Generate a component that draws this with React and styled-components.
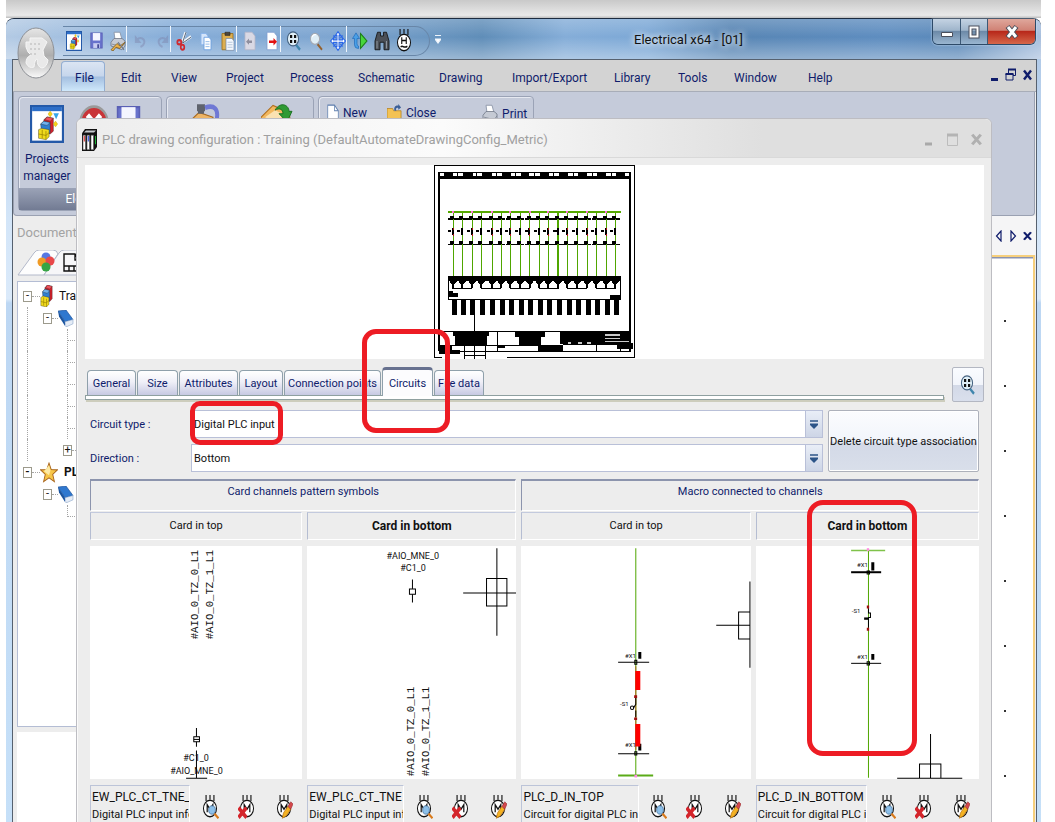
import styled, { createGlobalStyle } from "styled-components";

const GlobalStyle = createGlobalStyle`
  * {
    box-sizing: border-box;
  }

  body {
    margin: 0;
    background: #fff;
    font-family: Roboto, "Liberation Sans", sans-serif;
    font-size: 12px;
    color: #0f1c6b;
  }

  button,
  select {
    font: inherit;
    color: inherit;
    margin: 0;
    padding: 0;
    border: none;
    background: none;
  }

  svg {
    display: block;
    flex: none;
  }
`;

const Page = styled.div`
  position: relative;
  display: flex;
  flex-direction: column;
  height: 100vh;
  padding: 0 14px 0 6px;
  overflow: hidden;
`;

const TopBand = styled.div`
  height: 18px;
  flex: none;
  background: linear-gradient(#c9c9c9, #e9e9e9 85%, #bdbdbd);
`;

const MainWindow = styled.div`
  flex: 1;
  display: flex;
  flex-direction: column;
  min-height: 0;
  padding: 0 4px 0 6px;
  border-top: 1px solid #1c2b3f;
  border-radius: 8px 8px 0 0;
  background: linear-gradient(#a9c4e4, #d3e5f8 200px, #dbeafa 280px, #bdd7f3 284px, #c6e0f8);
`;

const TitleBar = styled.header`
  display: flex;
  align-items: center;
  height: 40px;
  flex: none;
  margin: 0 -4px 0 -6px;
  padding-left: 57px;
  border-radius: 8px 8px 0 0;
  background: linear-gradient(
      rgba(255, 255, 255, 0.2),
      rgba(255, 255, 255, 0) 45%,
      rgba(255, 255, 255, 0.35)
    ),
    linear-gradient(
      90deg,
      #b3cae4,
      #86add8 16%,
      #7da5d0 32%,
      #5f8db8 46%,
      #84add8 54%,
      #7ca8d6 62%,
      #5785b4 70%,
      #5e8dc0 85%,
      #5a88b8 92%,
      #a9c0de
    );
`;

const QuickBar = styled.div`
  display: flex;
  align-items: center;
  height: 30px;
  width: 367px;
  margin-top: 3px;
  border: 1px solid #6886a8;
  border-left: none;
  border-radius: 0 15px 15px 0;
`;

const QuickButton = styled.button`
  display: flex;
  justify-content: center;
  width: 22px;
  flex: none;
  opacity: ${(props) => (props.$dim ? 0.4 : 1)};
`;

const QuickItem = styled.div`
  position: relative;
  display: flex;
  align-items: center;
  width: 22px;
  height: 30px;

  &::after {
    content: "";
    display: ${(props) => (props.$line ? "block" : "none")};
    position: absolute;
    right: 2px;
    top: 0;
    width: 1px;
    height: 26px;
    background: #f0f6fd;
  }
`;

const MoreButton = styled.button`
  margin-left: 5px;
`;

const WindowTitle = styled.h1`
  flex: 1;
  margin: 0 0 0 193px;
  font-size: 13px;
  font-weight: normal;
  color: #111;
  text-shadow: 0 0 6px #fff, 0 0 8px #fff;
`;

const WindowButtons = styled.div`
  display: flex;
  align-self: flex-start;
  height: 26px;
  margin-right: 5px;
  border: 1px solid #2d4a68;
  border-top: none;
  border-radius: 0 0 6px 6px;
  overflow: hidden;
  box-shadow: 0 0 2px #d8e8f8;
`;

const WindowButton = styled.button`
  display: flex;
  align-items: center;
  justify-content: center;
  width: ${(props) => (props.$close ? 48 : 27)}px;
  background: ${(props) =>
    props.$close
      ? "linear-gradient(#dfa79c, #d08275 45%, #b8281a 50%, #d5674a)"
      : "linear-gradient(#c4d3e3, #9fb5cb 45%, #6d8aa8 50%, #9ab6d0)"};

  & + & {
    border-left: 1px solid #3c5875;
  }
`;

const Orb = styled.button`
  position: absolute;
  left: 17px;
  top: 27px;
`;

const Client = styled.div`
  flex: 1;
  display: flex;
  flex-direction: column;
  min-height: 0;
  border: 1px solid #56616f;
  border-bottom: none;
  background: #ededed;
`;

const MenuBar = styled.nav`
  display: flex;
  justify-content: space-between;
  height: 32px;
  flex: none;
  padding-left: 48px;
  background: #d3d3d3;
  border-bottom: 1px solid #a8adb8;
`;

const MenuList = styled.div`
  display: grid;
  grid-template-columns: 46px 50px 55px 64px 68px 81px 73px 102px 64px 56px 74px 51px;
  align-items: end;
`;

const MenuLink = styled.a`
  height: 30px;
  padding-left: 13px;
  margin-right: 2px;
  border-radius: 4px 4px 0 0;
  border: 1px solid ${(props) => (props.$active ? "#93aed2" : "transparent")};
  border-bottom: none;
  background: ${(props) =>
    props.$active
      ? "linear-gradient(#dbe5f3, #c6d6ec 48%, #a4bfe0 52%, #cfe8fb)"
      : "none"};
  line-height: 32px;
  color: #0f1c6b;
  text-decoration: none;
`;

const MenuControls = styled.div`
  display: flex;
  align-items: center;
  gap: 6px;
  padding: 0 4px 2px 0;
`;

const Ribbon = styled.div`
  display: flex;
  gap: 4px;
  height: 124px;
  flex: none;
  margin-right: 1px;
  padding: 4px;
  border: 1px solid #9aa1b2;
  border-top: none;
  border-radius: 0 0 4px 4px;
  background: #c5cbda;
`;

const RibbonGroup = styled.section`
  display: flex;
  flex-direction: column;
  width: ${(props) => props.$width}px;
  border: 1px solid #9ba3b6;
  border-radius: 4px;
  box-shadow: inset 1px 1px 0 #e6e9f1;
`;

const GroupTools = styled.div`
  display: flex;
  flex: 1;
  align-items: flex-start;
  gap: ${(props) => props.$gap}px;
  padding: ${(props) => props.$pad};
`;

const GroupTitle = styled.div`
  height: 22px;
  line-height: 22px;
  text-align: center;
  color: #fff;
  background: linear-gradient(#9ba3b7, #727b93);
`;

const BigTool = styled.button`
  display: flex;
  flex-direction: column;
  align-items: center;
  gap: 8px;
  width: 50px;
  line-height: 17px;
`;

const IconTool = styled.button`
  display: block;
`;

const SmallTool = styled.button`
  display: flex;
  align-items: center;
  gap: 4px;
  margin-right: ${(props) => props.$space}px;
  line-height: 18px;
`;

const Workspace = styled.div`
  flex: 1;
  display: flex;
  justify-content: space-between;
  min-height: 0;
`;

const DocsPanel = styled.aside`
  display: flex;
  flex-direction: column;
  width: 140px;
  padding-left: 4px;
`;

const DocsTitle = styled.div`
  height: 34px;
  line-height: 34px;
  font-size: 13px;
  color: #a3a3a3;
`;

const TreeBox = styled.div`
  height: 446px;
  flex: none;
  margin-top: 5px;
  padding: 3px 0 0 5px;
  border: 1px solid #b4bdd4;
  border-right: none;
  background: #fff;
`;

const TreeRow = styled.div`
  position: relative;
  display: flex;
  align-items: center;
  height: 22px;
  padding-left: ${(props) => props.$depth * 20}px;
  color: #111;
  font-weight: ${(props) => (props.$bold ? "bold" : "normal")};

  &::before {
    content: "";
    display: ${(props) => (props.$trunk ? "block" : "none")};
    position: absolute;
    left: 4px;
    top: 0;
    height: 22px;
    border-left: 1px dotted #a5a5a5;
  }

  &::after {
    content: "";
    display: ${(props) => (props.$branch ? "block" : "none")};
    position: absolute;
    left: 44px;
    top: 0;
    height: 22px;
    border-left: 1px dotted #a5a5a5;
  }
`;

const Expander = styled.button`
  width: 9px;
  height: 11px;
  border: 1px solid #9c9a8c;
  background: #fff;
  font-size: 11px;
  line-height: 8px;
  color: #111;
`;

const TreeDash = styled.span`
  width: ${(props) => (props.$short ? 6 : 8)}px;
  border-top: 1px dotted #a5a5a5;
`;

const TreeCorner = styled.span`
  align-self: flex-start;
  width: 10px;
  height: 12px;
  margin-left: 4px;
  border: 1px dotted #a5a5a5;
  border-width: 0 0 1px 1px;
`;

const TreeLabel = styled.span`
  margin-left: 6px;
`;

const OutputBox = styled.div`
  flex: 1;
  margin-top: 5px;
  background: #fff;
`;

const DrawingPane = styled.div`
  display: flex;
  flex-direction: column;
  width: 60px;
`;

const DrawingNav = styled.div`
  display: flex;
  align-items: center;
  justify-content: flex-end;
  gap: 6px;
  height: 39px;
  padding-right: 4px;
  background: #f5f5f6;
`;

const Sheet = styled.div`
  flex: 1;
  margin-right: 1px;
  border: 1px solid #f6cf7c;
  border-width: 2px 2px 0 0;
  background: linear-gradient(#8a93b0, #8a93b0 1px, #fff 2px);
  overflow: hidden;
`;

const GridDot = styled.div`
  width: 2px;
  height: 2px;
  margin: 63px 0 63px 28px;
  background: #333;

  & + & {
    margin-top: 0;
  }
`;

const Dialog = styled.div`
  position: absolute;
  left: 76px;
  right: 63px;
  top: 118px;
  bottom: -60px;
  border: 1px solid #bdbdc2;
  border-radius: 6px 6px 0 0;
  background: #ededed;
  box-shadow: inset 1px 1px 0 #fafafa;
`;

const DialogTitleBar = styled.div`
  display: flex;
  align-items: center;
  gap: 4px;
  height: 39px;
  padding: 3px 9px 0 5px;
  border-radius: 6px 6px 0 0;
  border-bottom: 1px solid #d9d9d9;
  background: linear-gradient(90deg, #ededed, #fbfbfb 40%, #dfdfdf 75%, #dfdfdf);
`;

const DialogTitle = styled.h2`
  flex: 1;
  margin: 0;
  font-size: 13px;
  font-weight: normal;
  color: #a0a0a0;
`;

const DialogControls = styled.div`
  display: flex;
  gap: 13px;
`;

const Preview = styled.div`
  display: flex;
  justify-content: center;
  margin: 7px 7px 0 8px;
  background: #fff;
`;

const TabLine = styled.div`
  display: flex;
  align-items: flex-start;
  justify-content: space-between;
  gap: 8px;
  margin: 8px 7px 0 8px;
`;

const TabArea = styled.div`
  flex: 1;
`;

const TabList = styled.div`
  display: flex;
  align-items: flex-end;
  gap: 1px;
  height: 28px;
  padding-left: 2px;
`;

const Tab = styled.button`
  width: ${(props) => props.$width}px;
  height: ${(props) => (props.$active ? 29 : 25)}px;
  margin-bottom: ${(props) => (props.$active ? -1 : 0)}px;
  position: relative;
  border: 1px solid #8fa0ab;
  border-top: ${(props) => (props.$active ? "3px solid #67718f" : "1px solid #8fa0ab")};
  border-bottom: none;
  border-radius: 4px 4px 0 0;
  background: ${(props) =>
    props.$active ? "#fcfcfe" : "linear-gradient(#fff, #f0f0f8 45%, #c7c9e2)"};
  white-space: nowrap;
  font-size: 11px;
`;

const TabRail = styled.div`
  height: 5px;
  border: 1px solid #8fa0a0;
  background: #fff;
  box-shadow: 1px 2px 0 #cdcdbd;
`;

const ZoomButton = styled.button`
  display: flex;
  align-items: center;
  justify-content: center;
  width: 32px;
  height: 35px;
  border: 1px solid #b3b7c2;
  border-radius: 2px;
  background: linear-gradient(#fafcff, #f2f5fb 50%, #d3d9e7 52%, #d9dfec);
`;

const Body = styled.div`
  margin: 8px 12px 0 13px;
  font-size: 11px;
`;

const FormArea = styled.div`
  display: flex;
  gap: 5px;
  height: 62px;
`;

const Fields = styled.div`
  flex: 1;
  display: flex;
  flex-direction: column;
  gap: 6px;
`;

const Field = styled.div`
  display: flex;
  align-items: center;
  height: 28px;
`;

const FieldLabel = styled.label`
  width: 101px;
`;

const SelectBox = styled.div`
  position: relative;
  flex: 1;
  height: 28px;
  border: 1px solid #b9c0d8;
  background: #fff;
`;

const Select = styled.select`
  appearance: none;
  width: 100%;
  height: 26px;
  padding-left: 2px;
  color: #111;
`;

const SelectArrow = styled.span`
  position: absolute;
  right: 0;
  top: 0;
  display: flex;
  align-items: center;
  justify-content: center;
  width: 17px;
  height: 26px;
  border-left: 1px solid #b9c0d8;
  background: linear-gradient(#e9eef7, #cdd5e6);
  pointer-events: none;
`;

const DeleteButton = styled.button`
  width: 151px;
  border: 1px solid #adb1bb;
  border-radius: 2px;
  background: linear-gradient(#fbfcfe, #f2f5fb 50%, #d3d9e7 54%, #d9dfea);
  box-shadow: inset 0 0 0 1px #fff;
  color: #111;
  white-space: nowrap;
`;

const Columns = styled.div`
  display: grid;
  grid-template-columns: 212fr 209fr 229fr 223fr;
  column-gap: 5px;
  margin-top: 7px;
`;

const GroupHead = styled.div`
  grid-column: span 2;
  height: 32px;
  line-height: 22px;
  border: 1px solid #fff;
  border-top: 2px solid #8c94ad;
  border-left: 1px solid #8c94ad;
  text-align: center;
`;

const ColumnHead = styled.div`
  height: 28px;
  margin: 1px 0 6px;
  line-height: 26px;
  border: 1px solid #fff;
  border-top-color: #c3cade;
  border-left-color: #b5bdd2;
  text-align: center;
  font-size: ${(props) => (props.$bold ? 12 : 11)}px;
  font-weight: ${(props) => (props.$bold ? "bold" : "normal")};
  color: #111;
`;

const Canvas = styled.svg`
  width: 100%;
  height: 233px;
  background: #fff;
`;

const CardFoot = styled.div`
  display: flex;
  min-width: 0;
  margin-top: 6px;
`;

const CardName = styled.div`
  flex: 1;
  min-width: 0;
  height: 44px;
  margin-right: 1px;
  padding: 2px 0 0 1px;
  border: 1px solid #fff;
  border-top-color: #bcc4d8;
  border-left-color: #bcc4d8;
  overflow: hidden;
  white-space: nowrap;
  line-height: 18px;
  color: #111;
`;

const CardCode = styled.div`
  font-size: 12px;
`;

const CardText = styled.div`
  font-size: 11px;
`;

const CardButton = styled.button`
  width: 37px;
  height: 44px;
  display: flex;
  justify-content: center;
  padding-top: 10px;
`;

const Mark = styled.div`
  position: absolute;
  left: ${(props) => props.$x}px;
  top: ${(props) => props.$y}px;
  width: ${(props) => props.$w}px;
  height: ${(props) => props.$h}px;
  border: 5px solid #ed1c24;
  border-radius: ${(props) => props.$r}px;
  pointer-events: none;
`;

const Icon = ({ w = 16, h = 20, box = "0 0 16 16", children }) => (
  <svg width={w} height={h} viewBox={box} preserveAspectRatio='none' fill='none'>
    {children}
  </svg>
);

const Cubes = () => (
  <g stroke='#222' strokeWidth='.3'>
    <path d='M6 2l3-2 6 1v9l-3 2-5-1z' fill='#d3202a' />
    <path d='M9 0l6 1-3 2-5-1z' fill='#f0505a' />
    <path d='M3 5l3-2 6 1v7l-3 2-5-1z' fill='#2f7fd0' />
    <path d='M6 3l6 1-3 2-6-1z' fill='#6fb2ee' />
    <path d='M1 9l3-1 7 1v5l-3 2-7-1z' fill='#f0da1c' />
    <path d='M1 12l7 1 3-2M4.500 9v6M8 10v6' stroke='#9a8500' strokeWidth='.6' />
  </g>
);

const ManagerIcon = ({ w, h }) => (
  <Icon w={w} h={h}>
    <rect x='.5' y='.5' width='15' height='15' fill='#fff' stroke='#2459a8' />
    <path d='M1 1.700h14' stroke='#2e6fc8' strokeWidth='1.800' />
    <g transform='translate(3.500 5) scale(.5 .6)'>
      <Cubes />
    </g>
    <path d='M8.500 3.800l1-1.200 1 1.200-1 1.200zM11 8l1-1.200 1 1.200-1 1.200z' fill='#f5d21c' stroke='#c9a400' strokeWidth='.2' />
    <path d='M11 3.500h2.600L12.300 6z' fill='#34a6e8' />
  </Icon>
);

const SaveIcon = ({ w, h }) => (
  <Icon w={w} h={h}>
    <path d='M1 1h14v14H1z' fill='#6872cc' stroke='#5a60b5' />
    <path d='M3.500 1h9v7h-9z' fill='#f4f5ff' />
    <path d='M4 10.500h8V15H4z' fill='#c9cdf0' />
    <path d='M9 11.500h2V15H9z' fill='#3b4192' />
  </Icon>
);

const PrinterIcon = ({ tool }) => (
  <Icon>
    <path d='M5 7l-1-6h6l2 6z' fill='#fff' stroke='#8b95a8' strokeWidth='.8' />
    <path d='M1 9l3-3h8l3 2v4l-3 3-11-3z' fill='#c5cad4' stroke='#6f7786' strokeWidth='.7' />
    <path d='M2 10.500l10 2 3-3' stroke='#6f7786' strokeWidth='.6' />
    {tool && (
      <>
        <path d='M1 15l6-5 3 2 5-3-5 5-4-1-3 3z' fill='#e9b04a' stroke='#7c5a1e' strokeWidth='.7' />
        <path d='M8 9l6 6' stroke='#6f7786' />
      </>
    )}
  </Icon>
);

const UndoIcon = ({ flip }) => (
  <Icon w={15} h={16}>
    <g transform={flip ? "translate(16 0) scale(-1 1)" : undefined}>
      <path d='M4 7c4-4 9-1 8 3-.4 2-2 3-4 4' stroke='#7c7fa6' strokeWidth='2' />
      <path d='M2 2v8h7z' fill='#7c7fa6' />
    </g>
  </Icon>
);

const ScissorsIcon = () => (
  <Icon>
    <path d='M6 9.500L9.500 1M7 9l8-4.500' stroke='#f1f4f8' strokeWidth='2.400' />
    <path d='M6.500 9.500L10 1M7 9.500l8-4.500' stroke='#48586c' strokeWidth='.8' />
    <ellipse cx='3.300' cy='9' rx='2' ry='1.700' stroke='#cf2a30' strokeWidth='1.700' />
    <ellipse cx='6.500' cy='13' rx='1.800' ry='2' stroke='#cf2a30' strokeWidth='1.700' />
  </Icon>
);

const CopyIcon = () => (
  <Icon>
    <path d='M3 2h5l2 2v7H3z' fill='#d5e5fa' stroke='#8ab4ec' strokeWidth='.8' />
    <path d='M6 5h5l2 2v8H6z' fill='#fff' stroke='#6b9fe0' strokeWidth='.8' />
    <path d='M7.500 8.500h4M7.500 10.500h4M7.500 12.500h4' stroke='#7ba9e2' strokeWidth='.7' />
  </Icon>
);

const PasteIcon = () => (
  <Icon>
    <path d='M2 2h11v13H2z' fill='#dcae50' stroke='#9d7422' strokeWidth='.8' />
    <path d='M5 1h5v2.500H5z' fill='#4d463a' stroke='#2f2a22' strokeWidth='.6' />
    <path d='M6 6h6l2 2v7.500H6z' fill='#f4f8fd' stroke='#6d84a8' strokeWidth='.6' />
    <path d='M7.500 9h5M7.500 11h5M7.500 13h5' stroke='#a3b7d3' strokeWidth='.7' />
  </Icon>
);

const SheetIcon = ({ back }) => (
  <Icon>
    <path d='M3 1h7l3 3v11H3z' fill={back ? "#d9d9e4" : "#fff"} stroke={back ? "#b7b8c8" : "#7f9dcf"} strokeWidth='.7' />
    <path
      d={back ? "M4 8.500l3-2.500v1.500h3v2H7V11z" : "M13 8.500L9.500 5.500v2H5v2h4.500v2z"}
      fill={back ? "#8f8f9e" : "#e21212"}
    />
  </Icon>
);

const LensIcon = ({ fit }) => (
  <Icon>
    <path d='M9.500 10.500l4.500 4.500' stroke={fit ? "#3f86ad" : "#94612e"} strokeWidth={fit ? 2.200 : 1.800} />
    <ellipse cx='7' cy='6.300' rx={fit ? 5.600 : 4.600} ry={fit ? 5.600 : 4.400} fill='#dfeef6' stroke={fit ? "#44617f" : "#a3a9b3"} />
    {fit ? (
      <path d='M4 3.200h2.200v2.400H4zM8 3.200h2.200v2.400H8zM4 7.200h2.200v2.400H4zM8 7.200h2.200v2.400H8z' fill='#111' />
    ) : (
      <path d='M4 5c1-2 3-2.500 4-2' stroke='#fff' />
    )}
  </Icon>
);

const PanIcon = () => (
  <Icon>
    <path
      d='M8 .5l2.500 3H9V7h3.500V5.500l3 2.500-3 2.500V9H9v3.500h1.500L8 15.500l-2.500-3H7V9H3.500v1.500L.5 8l3-2.500V7H7V3.500H5.500z'
      fill='#fff'
      stroke='#2a67e8'
      strokeWidth='1'
    />
    <path d='M3.500 3.500l2 2M12.500 3.500l-2 2M3.500 12.500l2-2M12.500 12.500l-2-2' stroke='#2a67e8' strokeWidth='1.300' />
  </Icon>
);

const RefreshIcon = () => (
  <Icon>
    <path d='M2.500 6v5q0 3 4 3v-2q-1.500 0-1.500-2V6h2.500L4 1.500.5 6z' fill='#4a9fe6' stroke='#1c68b8' strokeWidth='.6' />
    <path d='M8.500 2l6.500 6-6.500 6z' fill='#48d63c' stroke='#1c7d16' strokeWidth='.9' />
  </Icon>
);

const BinocularsIcon = () => (
  <Icon>
    <path d='M3.500 1h3v3h3V1h3l2.500 7v7h-5V9H6v6H1V8z' fill='#4b5058' stroke='#15171a' strokeWidth='.8' />
    <path d='M3 8v6M12.500 8v6' stroke='#8e959e' />
  </Icon>
);

const MotorIcon = ({ kind }) => (
  <Icon w={18} h={24}>
    <path d='M4.500 0v4M8 0v3M11.500 0v4' stroke='#111' />
    <ellipse cx='8' cy='9' rx='5.800' ry='5.500' fill='#fff' stroke='#111' strokeWidth='.9' />
    {kind ? (
      <path d='M5.500 11.500v-5l2.500 3 2.500-3v5' stroke='#111' strokeWidth='1.100' />
    ) : (
      <path d='M6 5.500v4.500M10 5.500v4.500M6 7.700h4M5 12c2-1.500 3 1.200 6-.5' stroke='#111' />
    )}
    {kind === "find" && (
      <>
        <path d='M11.500 12l4 3.500' stroke='#d97a1b' strokeWidth='1.600' />
        <ellipse cx='9.800' cy='10' rx='3' ry='2.800' fill='#8cc0ea' stroke='#4b7298' strokeWidth='.6' />
      </>
    )}
    {kind === "delete" && <path d='M.5 8.500l7 6.500M7.500 8.500l-7 6.500' stroke='#d4252b' strokeWidth='2.800' />}
    {kind === "edit" && (
      <>
        <path d='M6.500 15.500l1-3.500 4-4.500 2.500 2-4 4.500z' fill='#f4b223' stroke='#b36b0c' strokeWidth='.5' />
        <path d='M11.500 7.500l2.500-3 2 1.500-2 3.500z' fill='#d5484b' stroke='#8c2327' strokeWidth='.4' />
      </>
    )}
  </Icon>
);

const BookIcon = () => (
  <Icon w={16} h={17}>
    <path d='M0 1l8-1 7 9-8 2z' fill='#2f78cf' stroke='#1c4e94' strokeWidth='.6' />
    <path d='M0 1l7 10v4L1 6z' fill='#1a549f' />
    <path d='M7 11l8-2v4l-7 3z' fill='#e5ecf6' stroke='#7e9cc4' strokeWidth='.5' />
  </Icon>
);

const StarIcon = () => (
  <Icon w={18} h={21}>
    <path
      d='M8 .8l2 5 5.500.2-4.200 3.500 1.500 5.500L8 12l-4.800 3 1.500-5.500L.5 6 6 5.800z'
      fill='#f7c648'
      stroke='#a8641c'
      strokeWidth='.8'
    />
    <path d='M8 2.500l1.300 4L8 10 3.500 7z' fill='#fdeaa5' />
  </Icon>
);

const CrossGlyph = ({ color = "#0f1c6b", w = 9, h = 12 }) => (
  <Icon w={w} h={h} box='0 0 9 12'>
    <path d='M1 1.500l7 9M8 1.500l-7 9' stroke={color} strokeWidth='2.400' />
  </Icon>
);

const QUICK_TOOLS = [
  { name: "Projects manager", icon: <ManagerIcon w={16} h={20} /> },
  { name: "Save", icon: <SaveIcon w={13} h={17} /> },
  { name: "Print", icon: <PrinterIcon tool />, line: true },
  { name: "Undo", icon: <UndoIcon />, dim: true },
  { name: "Redo", icon: <UndoIcon flip />, dim: true, line: true },
  { name: "Cut", icon: <ScissorsIcon /> },
  { name: "Copy", icon: <CopyIcon /> },
  { name: "Paste", icon: <PasteIcon />, line: true },
  { name: "Previous", icon: <SheetIcon back /> },
  { name: "Next", icon: <SheetIcon />, line: true },
  { name: "Zoom fit", icon: <LensIcon fit /> },
  { name: "Zoom", icon: <LensIcon /> },
  { name: "Pan", icon: <PanIcon />, line: true },
  { name: "Refresh", icon: <RefreshIcon /> },
  { name: "Find", icon: <BinocularsIcon /> },
  { name: "Component", icon: <MotorIcon /> },
];

const MENUS = [
  "File",
  "Edit",
  "View",
  "Project",
  "Process",
  "Schematic",
  "Drawing",
  "Import/Export",
  "Library",
  "Tools",
  "Window",
  "Help",
];

const TABS = [
  ["General", 49],
  ["Size", 41],
  ["Attributes", 59],
  ["Layout", 44],
  ["Connection points", 97],
  ["Circuits", 51],
  ["File data", 50],
];

const TREE = [
  { depth: 0, open: true, icon: <Icon w={13} h={22}><Cubes /></Icon>, label: "Training" },
  { depth: 1, open: true, icon: <BookIcon />, trunk: true },
  { depth: 2, trunk: true },
  { depth: 2, trunk: true },
  { depth: 2, trunk: true },
  { depth: 2, trunk: true },
  { depth: 2, trunk: true },
  { depth: 2, open: false, trunk: true },
  { depth: 0, open: true, icon: <StarIcon />, label: "PLC", bold: true },
  { depth: 1, open: true, icon: <BookIcon /> },
  { depth: 2 },
];

const WIRES = [
  100, 127, 157, 184, 217, 244, 271, 301, 329, 358, 385, 414, 442, 472, 502, 529, 559, 586,
];

const BAR_XS = [
  103, 130, 158, 188, 217, 247, 274, 304, 331, 361, 388, 418, 448, 475, 505, 533, 562, 589,
];

function SheetDrawing() {
  return (
    <svg
      width='201'
      height='194'
      viewBox='42 33 603 582'
      fill='none'
      stroke='#000'
      strokeWidth='3'
      shapeRendering='crispEdges'
    >
      <path d='M44 612V35h599v576H261M44 611h22' />
      <path d='M57 590V54M630 590V54' strokeWidth='6' />
      <path d='M54 64h579' strokeWidth='20' />
      <path
        d='M60 61h12M100 61h12M115 61h14M158 61h11M172 61h14M216 61h12M232 61h14M273 61h12M289 61h13M328 61h13M344 61h15M388 61h12M403 61h14M444 61h14M461 61h14M502 61h14M519 61h12M558 61h14M575 61h12M615 61h12'
        stroke='#fff'
        strokeWidth='8'
      />
      <path d='M84 174h519' stroke='#55a800' strokeWidth='6' />
      <path d='M84 195h171M258 195h54M315 195h197M516 195h84' strokeWidth='5' />
      <path d='M84 271h171M258 271h54M315 271h197M516 271h84' />
      {WIRES.map((x, i) => (
        <g key={x}>
          <path d={`M${x} 177v195`} stroke='#4fa600' strokeWidth='4' />
          <path d={`M${x - 9} 190h12M${x - 9} 266h12`} strokeWidth='8' />
          <path d={`M${x - 15} 230h9M${x - 5} 230h5M${x - 1} 222v22`} strokeWidth='6' />
          {i % 2 === 0 && <path d={`M${x - 3} 174h6`} stroke='#ff6fd8' strokeWidth='6' />}
          {i % 2 === 0 && <path d={`M${x} 222v6M${x} 239v6`} stroke='#b01010' strokeWidth='4' />}
          <path d={`M${x - 12} 381h24l-6 8h-3v14h-6v-14h-3z`} fill='#000' stroke='none' />
        </g>
      ))}
      {BAR_XS.map((x) => (
        <path key={x} d={`M${x} 437v45`} strokeWidth='15' />
      ))}
      <path d='M84 374h519' strokeWidth='15' />
      <path d='M97 404h60M184 404h60M271 404h60M358 404h58M442 404h60M529 404h58' />
      <path d='M86 374v62h516v-62' />
      <path d='M86 417h14M86 424h28M570 430h32' strokeWidth='12' />
      <path d='M163 478v137M133 615v-46h64v46M133 603h64M60 533h570M60 592h573' />
      <path
        d='M100 534h106v12h-6v28H105v-28h-5zM285 534h91v16h-13v24h-66v-24h-12zM420 534h210v36H420zM354 572h75v19h-75zM57 573h40v16h24v12H57zM592 568h46v16h-46zM234 574h20v8h-20z'
        fill='#000'
        stroke='none'
      />
      <path d='M233 533v58M530 570v22M95 574h330M429 571h170M602 570v22' />
      <path d='M555 543h45M555 553h45M555 563h72M444 567h10M474 567h12M500 567h14' stroke='#c9c9c9' strokeWidth='4' />
    </svg>
  );
}

const SvgText = styled.text`
  font-size: 27px;
  fill: #111;
  stroke: none;
  text-anchor: middle;
`;

const SvgTerm = styled.text`
  font-family: "Liberation Mono", monospace;
  font-size: 32px;
  fill: #111;
  stroke: none;
`;

const SvgRef = styled.text`
  font-size: 18px;
  fill: #111;
  stroke: none;
`;

function CardTop() {
  return (
    <Canvas viewBox='30 20 636 697' stroke='#000' strokeWidth='3' fill='none'>
      <SvgTerm transform='translate(355 299) rotate(-90)'>#AIO_0_TZ_0_L1</SvgTerm>
      <SvgTerm transform='translate(400 299) rotate(-90)'>#AIO_0_TZ_1_L1</SvgTerm>
      <path d='M349 565v56M349 632v82M318 715h63' />
      <path d='M341 591h17v15h-17z' fill='#fff' />
      <path d='M341 599h17' />
      <SvgText x='348' y='664'>#C1_0</SvgText>
      <SvgText x='349' y='704'>#AIO_MNE_0</SvgText>
    </Canvas>
  );
}

function CardBottom() {
  return (
    <Canvas viewBox='681 20 627 697' stroke='#000' strokeWidth='3' fill='none'>
      <SvgText x='998' y='59'>#AIO_MNE_0</SvgText>
      <SvgText x='999' y='95'>#C1_0</SvgText>
      <path d='M997 120v69' />
      <path d='M988 148h18v16h-18z' fill='#fff' />
      <path d='M1250 26v262M1149 160h159M1219 117h61v82h-61z' />
      <SvgTerm transform='translate(1003 709) rotate(-90)'>#AIO_0_TZ_0_L1</SvgTerm>
      <SvgTerm transform='translate(1048 709) rotate(-90)'>#AIO_0_TZ_1_L1</SvgTerm>
    </Canvas>
  );
}

function MacroTop() {
  return (
    <Canvas viewBox='18 20 687 697' stroke='#000' strokeWidth='3' fill='none'>
      <path d='M362 26v682' stroke='#4fa600' />
      <path d='M309 707h105' stroke='#5bab18' strokeWidth='6' />
      <path d='M358 709h8' stroke='#ff8be0' strokeWidth='8' />
      <path d='M309 368h93M309 642h93' />
      <path d='M362 380v250' stroke='#b06a20' />
      <path d='M374 337v20M374 612v20' strokeWidth='9' />
      <path d='M368 394v57M368 553v67' stroke='#f00' strokeWidth='15' />
      <path d='M359 362h6v12h-6zM359 636h6v10h-6z' />
      <path d='M362 474v20l-8 12M362 512v20' />
      <circle cx='351' cy='504' r='5' />
      <path d='M357 471h9M357 537h9' stroke='#a01010' strokeWidth='8' />
      <SvgRef x='330' y='354'>#X1</SvgRef>
      <SvgRef x='315' y='499'>-S1</SvgRef>
      <SvgRef x='330' y='623'>#X1</SvgRef>
      <path d='M704 126v258M603 257h101M704 217h-34v81h34' />
    </Canvas>
  );
}

function MacroBottom() {
  return (
    <Canvas viewBox='720 20 669 697' stroke='#000' strokeWidth='3' fill='none'>
      <path d='M1057 34v680' stroke='#4fa600' />
      <path d='M1005 33h102' stroke='#7fc24a' strokeWidth='5' />
      <path d='M1052 30h7' stroke='#ff8be0' strokeWidth='8' />
      <path d='M1005 98h90' strokeWidth='6' />
      <path d='M1005 371h90' />
      <path d='M1070 68v25M1070 343v17' strokeWidth='9' />
      <path d='M1053 94h7v9h-7zM1053 366h7v10h-7z' />
      <path d='M1057 206v14h6v14h-6v30' />
      <path d='M1044 237h14' strokeWidth='7' />
      <path d='M1052 202h7M1052 269h7' stroke='#a01010' strokeWidth='9' />
      <SvgRef x='1023' y='83'>#X1</SvgRef>
      <SvgRef x='1007' y='221'>-S1</SvgRef>
      <SvgRef x='1023' y='357'>#X1</SvgRef>
      <path d='M1243 583v132M1210 715v-42h64v42M1143 715h195' />
    </Canvas>
  );
}

const CARDS = [
  { head: "Card in top", code: "EW_PLC_CT_TNE_", text: "Digital PLC input info", Drawing: CardTop },
  { head: "Card in bottom", bold: true, code: "EW_PLC_CT_TNE", text: "Digital PLC input inf", Drawing: CardBottom },
  { head: "Card in top", code: "PLC_D_IN_TOP", text: "Circuit for digital PLC inp", Drawing: MacroTop },
  { head: "Card in bottom", bold: true, code: "PLC_D_IN_BOTTOM", text: "Circuit for digital PLC in", Drawing: MacroBottom },
];

function ComboField({ id, label, value }) {
  return (
    <Field>
      <FieldLabel htmlFor={id}>{label}</FieldLabel>
      <SelectBox>
        <Select id={id} defaultValue={value}>
          <option>{value}</option>
        </Select>
        <SelectArrow>
          <Icon w={8} h={9} box='0 0 8 9'>
            <path d='M0 1h8' stroke='#2c5488' strokeWidth='1.500' />
            <path d='M0 3.500h8v1.500L4 9 0 5z' fill='#2c5488' />
          </Icon>
        </SelectArrow>
      </SelectBox>
    </Field>
  );
}

function PlcDialog() {
  return (
    <Dialog role='dialog' aria-label='PLC drawing configuration'>
      <DialogTitleBar>
        <Icon w={16} h={22}>
          <path d='M0 3l3-3h12v13l-3 3H0z' fill='#111' />
          <path d='M2 2.500l2-1.500h10l-2 1.500z' fill='#c8ccd0' />
          <path d='M1 4.500h2.500V15H1zM5 4.500h2.500V15H5zM9 4.500h2.500V15H9z' fill='#fff' stroke='#555' strokeWidth='.5' />
          <path d='M2.300 5v4' stroke='#e02020' />
          <path d='M6.300 5v4' stroke='#2040e0' />
          <path d='M13.500 5v6' stroke='#18b030' />
        </Icon>
        <DialogTitle>
          PLC drawing configuration : Training (DefaultAutomateDrawingConfig_Metric)
        </DialogTitle>
        <DialogControls>
          <button aria-label='Minimize'>
            <Icon w={11} h={13} box='0 0 11 13'>
              <path d='M2 11h7' stroke='#a9a9a9' strokeWidth='3' />
            </Icon>
          </button>
          <button aria-label='Maximize'>
            <Icon w={11} h={13} box='0 0 11 13'>
              <path d='M.5 1.500h10v11H.5z' stroke='#bcbcbc' />
              <path d='M0 2h11' stroke='#b4b4b4' strokeWidth='3' />
            </Icon>
          </button>
          <button aria-label='Close'>
            <CrossGlyph color='#b0b0b0' w={11} h={13} />
          </button>
        </DialogControls>
      </DialogTitleBar>
      <Preview>
        <SheetDrawing />
      </Preview>
      <TabLine>
        <TabArea>
          <TabList role='tablist'>
            {TABS.map(([name, width]) => (
              <Tab
                key={name}
                role='tab'
                aria-selected={name === "Circuits"}
                $width={width}
                $active={name === "Circuits"}
              >
                {name}
              </Tab>
            ))}
          </TabList>
          <TabRail />
        </TabArea>
        <ZoomButton aria-label='Zoom fit'>
          <LensIcon fit />
        </ZoomButton>
      </TabLine>
      <Body>
        <FormArea>
          <Fields>
            <ComboField id='type' label='Circuit type :' value='Digital PLC input' />
            <ComboField id='direction' label='Direction :' value='Bottom' />
          </Fields>
          <DeleteButton>Delete circuit type association</DeleteButton>
        </FormArea>
        <Columns>
          <GroupHead>Card channels pattern symbols</GroupHead>
          <GroupHead>Macro connected to channels</GroupHead>
          {CARDS.map(({ head, bold }, i) => (
            <ColumnHead key={i} $bold={bold}>
              {head}
            </ColumnHead>
          ))}
          {CARDS.map(({ Drawing }, i) => (
            <Drawing key={i} />
          ))}
          {CARDS.map(({ code, text }, i) => (
            <CardFoot key={i}>
              <CardName>
                <CardCode>{code}</CardCode>
                <CardText>{text}</CardText>
              </CardName>
              {["find", "delete", "edit"].map((kind) => (
                <CardButton key={kind} aria-label={kind}>
                  <MotorIcon kind={kind} />
                </CardButton>
              ))}
            </CardFoot>
          ))}
        </Columns>
      </Body>
    </Dialog>
  );
}

function RibbonBar() {
  return (
    <Ribbon>
      <RibbonGroup $width={144}>
        <GroupTools $gap={7} $pad='8px 0 0 3px'>
          <BigTool>
            <ManagerIcon w={34} h={38} />
            <span>
              Projects
              <br />
              manager
            </span>
          </BigTool>
          <IconTool aria-label='Close project'>
            <Icon w={30} h={36}>
              <circle cx='8' cy='8' r='7.300' fill='#c93438' stroke='#9a9a9a' strokeWidth='1.200' />
              <path d='M4.500 4.500l7 7M11.500 4.500l-7 7' stroke='#fff' strokeWidth='2.500' />
            </Icon>
          </IconTool>
          <IconTool aria-label='Save'>
            <SaveIcon w={25} h={34} />
          </IconTool>
        </GroupTools>
        <GroupTitle>Electrical</GroupTitle>
      </RibbonGroup>
      <RibbonGroup $width={148}>
        <GroupTools $gap={40} $pad='6px 0 0 22px'>
          <IconTool aria-label='Archive'>
            <Icon w={32} h={38}>
              <path d='M0 8l5-4 7 2-4 5z' fill='#eeb565' stroke='#a56a24' strokeWidth='.5' />
              <path d='M4 .5h4v3H4zM4.500 2.500h3v2h-3z' fill='#5f636d' />
              <path d='M8 2c5-1.500 6.500 1 6 4v6' stroke='#6f78d4' strokeWidth='2' />
            </Icon>
          </IconTool>
          <IconTool aria-label='Unarchive'>
            <Icon w={32} h={38}>
              <path d='M0 6l6-5 8 3 1 5-7 4-7-3z' fill='#f2b75e' stroke='#b06f20' strokeWidth='.5' />
              <path d='M2 6l5-3 5 2-5 3z' fill='#fbe2b2' />
              <path d='M7 3c3-4 7-2 7 .5h1.500L13 8 9 4.500h2c0-2-2-2.500-4-1.500z' fill='#2f9a34' stroke='#146c1a' strokeWidth='.4' />
            </Icon>
          </IconTool>
        </GroupTools>
      </RibbonGroup>
      <RibbonGroup $width={216}>
        <GroupTools $gap={0} $pad='7px 0 0 8px'>
          <SmallTool $space={20}>
            <Icon w={12} h={18}>
              <path d='M1 1h9l5 5v9H1z' fill='#fff' stroke='#5f7fae' />
              <path d='M10 1v5h5' stroke='#5f7fae' />
            </Icon>
            New
          </SmallTool>
          <SmallTool $space={46}>
            <Icon w={15} h={18}>
              <path d='M0 4h6l1 2h8v9H0z' fill='#f3c254' stroke='#b17d1c' strokeWidth='.7' />
              <path d='M8 6c-1-3 1-5 4-4.500V0l3 3-3 2V3.500C10 3.200 9 4 10 6z' fill='#3c5f97' />
            </Icon>
            Close
          </SmallTool>
          <SmallTool>
            <PrinterIcon />
            Print
          </SmallTool>
        </GroupTools>
      </RibbonGroup>
    </Ribbon>
  );
}

function DocumentsPanel() {
  return (
    <DocsPanel>
      <DocsTitle>Documents</DocsTitle>
      <Icon w={100} h={26} box='0 0 100 26'>
        <path d='M1 25L17 3q2-3 5-3h14q4 0 5 4l-14 21z' fill='#fdfdfd' stroke='#b3b9ca' />
        <path d='M27 25L42 3q2-3 5-3h53v25z' fill='#f6f6f8' stroke='#b3b9ca' />
        <circle cx='29' cy='7' r='4.500' fill='#5578e4' />
        <circle cx='25' cy='12' r='4.500' fill='#f09a24' />
        <circle cx='33' cy='11' r='4.500' fill='#e8484a' />
        <circle cx='29' cy='17' r='4.500' fill='#36a544' />
        <path d='M47 4h11l4 5v12H47zM47 16h15M52 16v5M57 16v5M58 4v6h4' stroke='#111' strokeWidth='1.400' />
      </Icon>
      <TreeBox>
        {TREE.map(({ depth, open, icon, label, bold, trunk }, i) => (
          <TreeRow
            key={i}
            $depth={depth}
            $bold={bold}
            $trunk={trunk}
            $branch={trunk && open === undefined}
          >
            {open === undefined && <TreeCorner />}
            {open !== undefined && <Expander>{open ? "-" : "+"}</Expander>}
            {open !== undefined && <TreeDash $short={depth === 1} />}
            {icon}
            {label && <TreeLabel>{label}</TreeLabel>}
          </TreeRow>
        ))}
      </TreeBox>
      <OutputBox />
    </DocsPanel>
  );
}

export default function App() {
  return (
    <Page>
      <GlobalStyle />
      <TopBand />
      <MainWindow>
        <TitleBar>
          <QuickBar>
            {QUICK_TOOLS.map(({ name, icon, dim, line }) => (
              <QuickItem key={name} $line={line}>
                <QuickButton aria-label={name} $dim={dim}>
                  {icon}
                </QuickButton>
              </QuickItem>
            ))}
          </QuickBar>
          <MoreButton aria-label='Customize'>
            <Icon w={6} h={10} box='0 0 6 10'>
              <path d='M0 1.500h6M0 5h6L3 9z' fill='#fff' stroke='#eef4fb' strokeWidth='1.200' />
            </Icon>
          </MoreButton>
          <WindowTitle>Electrical x64 - [01]</WindowTitle>
          <WindowButtons>
            <WindowButton aria-label='Minimize'>
              <Icon w={14} h={14} box='0 0 14 14'>
                <path d='M1.500 7.500h11v4h-11z' fill='#fff' stroke='#4a4f5c' />
              </Icon>
            </WindowButton>
            <WindowButton aria-label='Restore'>
              <Icon w={12} h={14} box='0 0 12 14'>
                <path d='M2.500 2.500h7v9h-7z' stroke='#4a4f5c' strokeWidth='4' />
                <path d='M2.500 2.500h7v9h-7z' stroke='#fff' strokeWidth='2' />
              </Icon>
            </WindowButton>
            <WindowButton aria-label='Close' $close>
              <Icon w={14} h={16} box='0 0 14 16'>
                <path d='M2.500 2.500l9 11M11.500 2.500l-9 11' stroke='#4a4f5c' strokeWidth='5' />
                <path d='M3 3l8 10M11 3L3 13' stroke='#fff' strokeWidth='3' />
              </Icon>
            </WindowButton>
          </WindowButtons>
        </TitleBar>
        <Client>
          <MenuBar>
            <MenuList>
              {MENUS.map((name) => (
                <MenuLink key={name} href='#' $active={name === "File"}>
                  {name}
                </MenuLink>
              ))}
            </MenuList>
            <MenuControls>
              <button aria-label='Minimize sheet'>
                <Icon w={9} h={12} box='0 0 9 12'>
                  <path d='M1 10.500h7' stroke='#0f1c6b' strokeWidth='3' />
                </Icon>
              </button>
              <button aria-label='Restore sheet'>
                <Icon w={12} h={13} box='0 0 12 13'>
                  <path d='M1 6h7v6H1zM3.500 5V1.500h7v6H8' stroke='#0f1c6b' />
                  <path d='M.5 6h8M3 1.500h8' stroke='#0f1c6b' strokeWidth='2' />
                </Icon>
              </button>
              <button aria-label='Close sheet'>
                <CrossGlyph />
              </button>
            </MenuControls>
          </MenuBar>
          <RibbonBar />
          <Workspace>
            <DocumentsPanel />
            <DrawingPane>
              <DrawingNav>
                <Icon w={8} h={12} box='0 0 8 12'>
                  <path d='M6 1v10L1.500 6z' stroke='#0f1c6b' strokeWidth='1.200' />
                </Icon>
                <Icon w={8} h={12} box='0 0 8 12'>
                  <path d='M2 1v10L6.500 6z' stroke='#0f1c6b' strokeWidth='1.200' />
                </Icon>
                <CrossGlyph h={10} />
              </DrawingNav>
              <Sheet>
                {[1, 2, 3, 4, 5, 6, 7, 8].map((n) => (
                  <GridDot key={n} />
                ))}
              </Sheet>
            </DrawingPane>
          </Workspace>
        </Client>
      </MainWindow>
      <Orb aria-label='Application menu'>
        <svg width='38' height='52' viewBox='0 0 38 52' fill='none'>
          <defs>
            <linearGradient id='orb' x1='0' y1='0' x2='0' y2='1'>
              <stop offset='0' stopColor='#e6e6e6' />
              <stop offset='.55' stopColor='#aeaeae' />
              <stop offset='1' stopColor='#fafafa' />
            </linearGradient>
          </defs>
          <ellipse cx='19' cy='26' rx='18' ry='25' fill='url(#orb)' stroke='#8e9196' />
          <path
            d='M9 20v-5h4v-4h12l5 4-4 8 1 6 4 4q-1 7-6 8-5-1-5-9-2 0-3 8-5 2-8-4 0-6 5-8l-3-3z'
            fill='#e9e9e9'
            stroke='#f6f6f6'
          />
          <path d='M13 17h10M13 22h10M13 27h8' stroke='#cfcfcf' strokeWidth='2' strokeDasharray='2 2' />
        </svg>
      </Orb>
      <PlcDialog />
      <Mark $x={362} $y={329} $w={88} $h={104} $r={14} />
      <Mark $x={190} $y={401} $w={93} $h={44} $r={10} />
      <Mark $x={807} $y={500} $w={110} $h={256} $r={16} />
    </Page>
  );
}
